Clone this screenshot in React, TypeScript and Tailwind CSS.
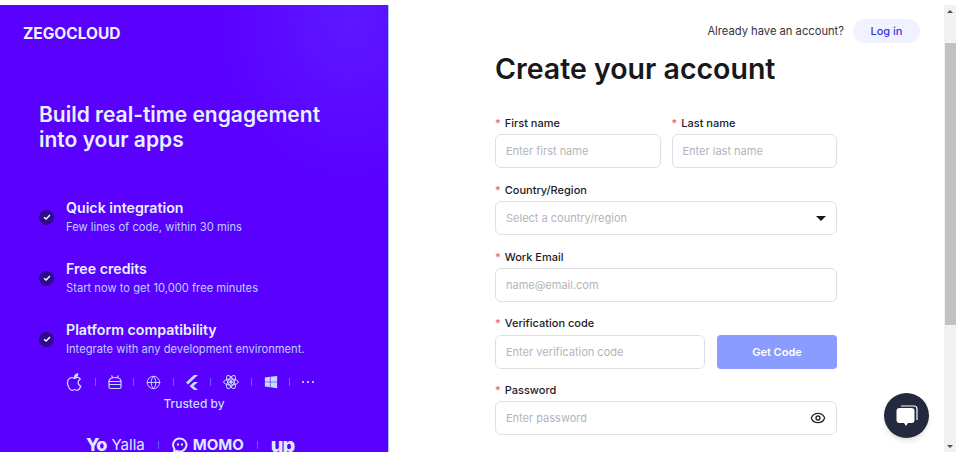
import { Eye, Globe } from 'lucide-react';
import { FaWindows } from 'react-icons/fa';

const features = [
    { title: 'Quick integration', text: 'Few lines of code, within 30 mins' },
    { title: 'Free credits', text: 'Start now to get 10,000 free minutes' },
    { title: 'Platform compatibility', text: 'Integrate with any development environment.' },
];

const Label = ({ text }: { text: string }) => (
    <div className="h-[17px] text-[11px] leading-[17px] font-medium text-[#1c1c28]">
        <span className="text-[#f25c5c] mr-[4px]">*</span>
        {text}
    </div>
);

const Field = ({ holder }: { holder: string }) => (
    <input
        placeholder={holder}
        className="h-[34px] w-full min-w-0 rounded-[6px] border border-[#e0e0e4] bg-white px-[10px] text-[11px] placeholder:text-[#b4b4ba]"
    />
);

const Divider = () => <span className="h-[8px] w-px bg-[#6f5cff]" />;

const App = () => {
    return (
        <div className="h-[457px] w-[961px] overflow-hidden bg-white pt-[5px] font-['Inter',sans-serif] flex">
            {/* Panel izquierdo */}
            <aside className="h-[447px] w-[389px] shrink-0 overflow-hidden bg-[radial-gradient(ellipse_at_90%_3%,#5c18ff_0%,#5a00ff_28%)] border-r border-[#a9c4ff] text-white">
                <div className="pt-[20px] pl-[23px] text-[15.500px] leading-[17px] font-bold text-[#eaf3ff]">ZEGOCLOUD</div>
                <h1 className="mt-[60px] pl-[39px] text-[21px] leading-[25px] font-semibold text-[#e6f3ff]">
                    Build real-time engagement
                    <br />
                    into your apps
                </h1>
                <ul className="mt-[47px] pl-[39px] flex flex-col gap-[25px]">
                    {features.map((f) => (
                        <li key={f.title} className="flex items-center gap-[12px] h-[36px]">
                            <span className="flex h-[15px] w-[15px] items-center justify-center rounded-full bg-[#2f0a8c]">
                                <svg width="8" height="8" viewBox="0 0 8 8" fill="none" stroke="white" strokeWidth="1.4">
                                    <path d="M1 4.2 3.1 6 7 2" />
                                </svg>
                            </span>
                            <div>
                                <div className="text-[14.200px] leading-[19px] font-semibold text-[#e6f3ff]">{f.title}</div>
                                <div className="text-[11.200px] leading-[18px] mt-[1px] text-[#b9d2ff]">{f.text}</div>
                            </div>
                        </li>
                    ))}
                </ul>
                <div className="mt-[16px] ml-[66px] flex w-[248px] h-[18px] items-center justify-between text-[#c4dcff]">
                    {/* apple */}
                    <svg width="17" height="19" viewBox="0 0 16 18" fill="none" stroke="currentColor" strokeWidth="1.2">
                        <path d="M8 5.2C6.5 4.2 4.8 4.2 3.4 5 1.6 6.1 1 8.4 1.6 10.8c.6 2.4 2.2 5.4 4 5.6 1 .1 1.5-.6 2.5-.6s1.500.7 2.500.6c1.300-.2 2.600-1.900 3.300-3.900-1.600-.7-2.500-2-2.500-3.500 0-1.400.8-2.500 2-3.200C12.600 4.300 11 4 9.800 4.400 9 4.700 8.500 5 8 5.200z" />
                        <path d="M8 4.500C8 2.700 9.200 1.200 11 .8c0 1.800-1.200 3.400-3 3.700z" fill="currentColor" />
                    </svg>
                    <Divider />
                    {/* android */}
                    <svg width="14" height="15" viewBox="0 0 14 15" fill="none" stroke="currentColor" strokeWidth="1.200">
                        <path d="M1 6.500C1 4 3.500 2.500 7 2.500s6 1.500 6 4z" />
                        <path d="M1 6.500h12v3H1zM1 9.500h12V12a1.500 1.500 0 0 1-1.500 1.500h-9A1.500 1.500 0 0 1 1 12z" />
                        <path d="M3.500 .5 4.800 2.800M10.500 .5 9.200 2.800" />
                    </svg>
                    <Divider />
                    <Globe size={15} strokeWidth={1.5} />
                    <Divider />
                    <svg width="13" height="15" viewBox="0 0 13 15" fill="currentColor">
                        <path d="M8 0h4L4 7.500 2 9.500 0 7.500z" />
                        <path d="M8 7h4L7.500 11 12 15H8L3.500 11z" />
                    </svg>
                    <Divider />
                    {/* react */}
                    <svg width="16" height="16" viewBox="-12 -12 24 24" fill="none" stroke="currentColor" strokeWidth="1.500">
                        <circle r="2" fill="currentColor" />
                        <ellipse rx="11" ry="4.500" />
                        <ellipse rx="11" ry="4.500" transform="rotate(60)" />
                        <ellipse rx="11" ry="4.500" transform="rotate(120)" />
                    </svg>
                    <Divider />
                    <FaWindows size={14} />
                    <Divider />
                    <span className="flex gap-[3px]">
                        <i className="h-[2px] w-[2px] rounded-full bg-[#dcebff]" />
                        <i className="h-[2px] w-[2px] rounded-full bg-[#dcebff]" />
                        <i className="h-[2px] w-[2px] rounded-full bg-[#dcebff]" />
                    </span>
                </div>
                <div className="mt-[4px] text-center text-[12px] leading-[17px] font-medium text-[#c4dcff]">Trusted by</div>
                <div className="mt-[23px] ml-[86px] flex items-center gap-[13px] text-[#dcebff]">
                    <span className="text-[15px] leading-[20px] flex items-center gap-[5px]">
                        <b className="font-extrabold text-[18px] tracking-[-1px]">Yo</b> Yalla
                    </span>
                    <Divider />
                    <span className="flex items-center gap-[5px] text-[15px] leading-[20px] font-bold">
                        <svg width="16" height="16" viewBox="0 0 16 16" fill="none" stroke="currentColor" strokeWidth="2">
                            <path d="M8 1.500a6.500 6.500 0 1 1-3 12.300L2 15l.5-3A6.500 6.500 0 0 1 8 1.500z" />
                            <path d="M6 6.500v2M10 6.500v2" />
                        </svg>
                        MOMO
                    </span>
                    <Divider />
                    <span className="text-[20px] leading-[20px] font-extrabold tracking-[-1px]">up</span>
                </div>
            </aside>

            {/* Formulario */}
            <main className="relative flex-1 min-w-0 flex">
                <div className="flex-1 min-w-0">
                    <div className="flex h-[24px] mt-[14px] items-center justify-end pr-[24px] gap-[9px]">
                        <span className="text-[11.200px] text-[#33333d]">Already have an account?</span>
                        <button className="h-[24px] w-[67px] rounded-full bg-[#f1f2ff] text-[11px] font-medium text-[#3b36e0]">Log in</button>
                    </div>
                    <div className="ml-[106px] w-[342px]">
                        <h2 className="mt-[8px] text-[28.500px] leading-[36px] font-semibold text-[#17171c]">Create your account</h2>
                        <div className="mt-[28px] grid grid-cols-2 gap-x-[11px]">
                            <div className="flex flex-col gap-[2px]">
                                <Label text="First name" />
                                <Field holder="Enter first name" />
                            </div>
                            <div className="flex flex-col gap-[2px]">
                                <Label text="Last name" />
                                <Field holder="Enter last name" />
                            </div>
                        </div>
                        <div className="mt-[14px] flex flex-col gap-[2px]">
                            <Label text="Country/Region" />
                            <div className="flex h-[34px] items-center justify-between rounded-[6px] border border-[#e0e0e4] px-[10px] text-[11px] text-[#b4b4ba]">
                                Select a country/region
                                <span className="h-0 w-0 border-x-[5px] border-t-[5px] border-x-transparent border-t-[#17171c]" />
                            </div>
                        </div>
                        <div className="mt-[14px] flex flex-col gap-[2px]">
                            <Label text="Work Email" />
                            <Field holder="name@email.com" />
                        </div>
                        <div className="mt-[13px] flex flex-col gap-[3px]">
                            <Label text="Verification code" />
                            <div className="flex gap-[12px]">
                                <div className="w-[210px] shrink-0">
                                    <Field holder="Enter verification code" />
                                </div>
                                <button className="h-[34px] flex-1 rounded-[4px] bg-[#8a9cff] text-[11px] font-semibold text-white">Get Code</button>
                            </div>
                        </div>
                        <div className="mt-[13px] flex flex-col gap-[2px]">
                            <Label text="Password" />
                            <div className="flex h-[34px] items-center justify-between rounded-[6px] border border-[#e0e0e4] px-[10px] text-[11px] text-[#b4b4ba]">
                                Enter password
                                <Eye size={16} className="text-[#26262e]" />
                            </div>
                        </div>
                    </div>
                </div>

                {/* Scrollbar */}
                <div className="relative mr-[5px] h-[447px] w-[12px] shrink-0 bg-[#f1f1f1]">
                    <div className="flex h-[12px] items-center justify-center">
                        <span className="h-0 w-0 border-x-[3px] border-b-[3px] border-x-transparent border-b-[#505050]" />
                    </div>
                    <div className="mx-auto mt-[26px] h-[282px] w-[11px] bg-[#c1c1c1]" />
                    <div className="absolute bottom-0 flex h-[12px] w-full items-center justify-center">
                        <span className="h-0 w-0 border-x-[3px] border-t-[3px] border-x-transparent border-t-[#505050]" />
                    </div>
                </div>

                {/* Chat */}
                <div className="absolute left-[495px] top-[388px] flex h-[45px] w-[45px] items-center justify-center rounded-full bg-[#232a3f] shadow-md">
                    <svg width="26" height="26" viewBox="0 0 26 26" fill="none">
                        <path d="M7 3h13a3 3 0 0 1 3 3v11" stroke="white" strokeWidth="1.200" />
                        <path d="M5.500 5h12a3 3 0 0 1 3 3v9a3 3 0 0 1-3 3h-3.500L12 23l-2-3H5.500a3 3 0 0 1-3-3V8a3 3 0 0 1 3-3z" fill="white" />
                    </svg>
                </div>
            </main>
        </div>
    );
};

export default App;
